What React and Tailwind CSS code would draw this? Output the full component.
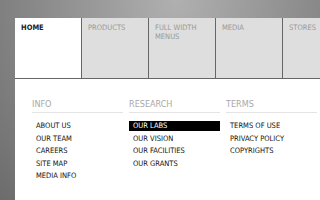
import React from 'react';

const tabs = [
  { label: 'HOME', active: true },
  { label: 'PRODUCTS' },
  { label: 'FULL WIDTH MENUS' },
  { label: 'MEDIA' },
  { label: 'STORES' },
];

const columns = [
  { title: 'INFO', items: ['ABOUT US', 'OUR TEAM', 'CAREERS', 'SITE MAP', 'MEDIA INFO'] },
  { title: 'RESEARCH', items: ['OUR LABS', 'OUR VISION', 'OUR FACILITIES', 'OUR GRANTS'], active: 'OUR LABS' },
  { title: 'TERMS', items: ['TERMS OF USE', 'PRIVACY POLICY', 'COPYRIGHTS'] },
];

const font = { fontFamily: '"DejaVu Sans Condensed", "Liberation Sans", Arial, sans-serif' };

export default function App() {
  return (
    <div
      className="w-[320px] h-[200px] overflow-hidden pt-[18px] pl-[15px] bg-[radial-gradient(ellipse_at_55%_0%,#b0b0b0_0%,#8a8a8a_55%,#6c6c6c_100%)]"
      style={font}
    >
      <div className="flex h-[61px] border-b border-[#666] w-[400px]">
        {tabs.map((t) => (
          <div
            key={t.label}
            className={`w-[67px] shrink-0 border-r border-[#666] pl-[6px] pt-[5px] pr-[10px] text-[7.5px] leading-[9px] ${
              t.active ? 'bg-white text-[#222] font-bold' : 'bg-[#dedede] text-[#999]'
            }`}
          >
            {t.label}
          </div>
        ))}
      </div>
      <div className="bg-white h-[200px] pt-[19px] pl-[17px] flex gap-[6px]">
        {columns.map((c) => (
          <div key={c.title} className="w-[91px] shrink-0">
            <div className="text-[9px] leading-[12px] text-[#a8a8a8] pb-[2px] border-b border-[#e4e4e4]">
              {c.title}
            </div>
            <ul className="mt-[8px]">
              {c.items.map((it) => (
                <li key={it} className="h-[12.5px]">
                  <div
                    className={`h-[10px] pl-[4px] text-[7.5px] leading-[10px] ${
                      c.active === it ? 'bg-black text-white' : 'text-[#111]'
                    }`}
                  >
                    {it}
                  </div>
                </li>
              ))}
            </ul>
          </div>
        ))}
      </div>
    </div>
  );
}
